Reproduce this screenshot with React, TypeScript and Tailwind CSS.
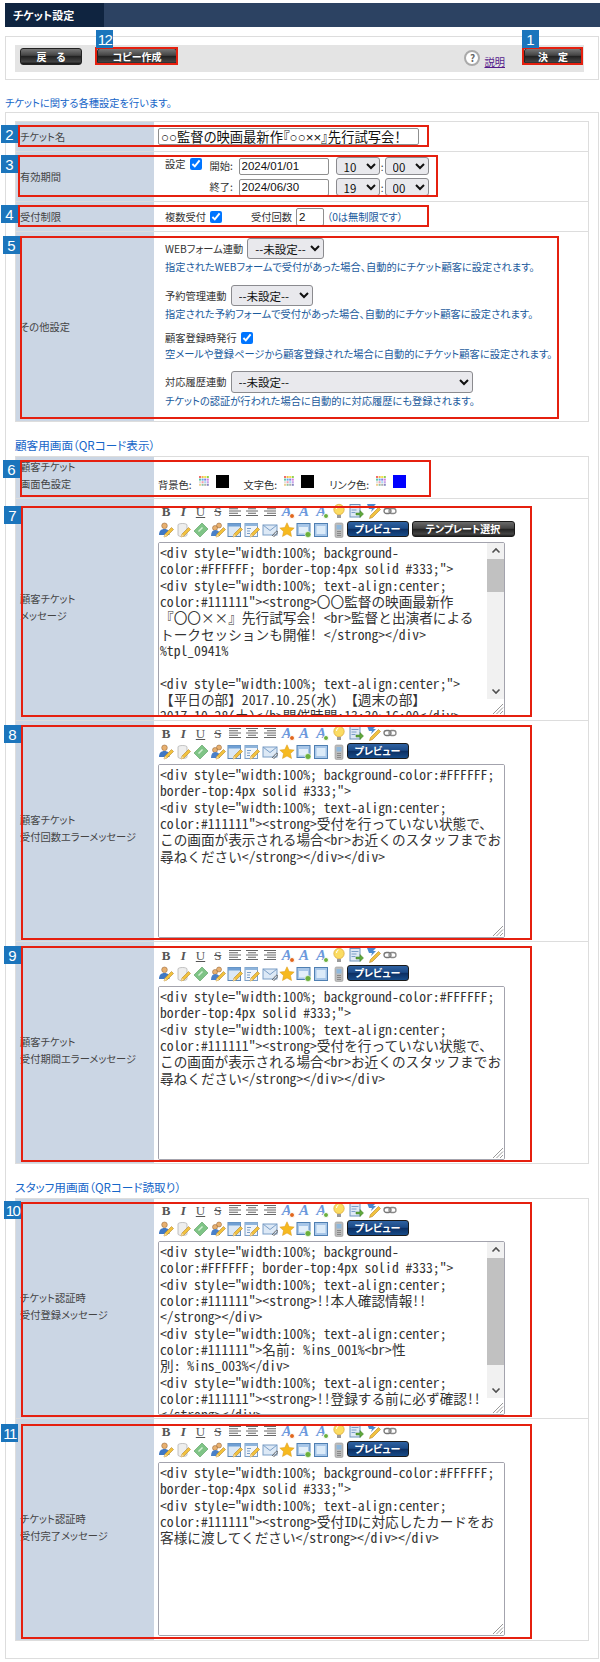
import type { ReactNode } from 'react'

const BODY1 = `<div style="width:100%; background-color:#FFFFFF; border-top:4px solid #333;">`
const CENTER = `<div style="width:100%; text-align:center; color:#111111">`

const MESSAGE_7 = `${BODY1}
${CENTER}<strong>〇〇監督の映画最新作
『〇〇××』先行試写会！ <br>監督と出演者による
トークセッションも開催！ </strong></div>
%tpl_0941%

<div style="width:100%; text-align:center;">
【平日の部】2017.10.25(水)　【週末の部】
2017.10.28(土)</b>開催時間：13:30～16:00</div>`

const ERROR_MESSAGE = `${BODY1}
${CENTER}<strong>受付を行っていない状態で、この画面が表示される場合<br>お近くのスタッフまでお尋ねください</strong></div></div>`

const MESSAGE_10 = `${BODY1}
${CENTER}<strong>!!本人確認情報!!</strong></div>
${CENTER}名前： %ins_001%<br>性
別： %ins_003%</div>
${CENTER}<strong>!!登録する前に必ず確認!!</strong></div>`

const MESSAGE_11 = `${BODY1}
${CENTER}<strong>受付IDに対応したカードをお客様に渡してください</strong></div></div>`

const marks = [
  { box: 'left-[522px] top-[47px] w-[61px] h-[18px]', badge: 'left-[522px] top-[30px]', label: '1' },
  { box: 'left-[95px] top-[47px] w-[83px] h-[18px]', badge: 'left-[96px] top-[30px]', label: '12' },
  { box: 'left-[18px] top-[125px] w-[411px] h-[22px]', badge: 'left-[1px] top-[125px]', label: '2' },
  { box: 'left-[18px] top-[155px] w-[420px] h-[42px]', badge: 'left-[1px] top-[155px]', label: '3' },
  { box: 'left-[18px] top-[205px] w-[411px] h-[22px]', badge: 'left-[1px] top-[205px]', label: '4' },
  { box: 'left-[20px] top-[236px] w-[539px] h-[183px]', badge: 'left-[3px] top-[236px]', label: '5' },
  { box: 'left-[20px] top-[460px] w-[411px] h-[37px]', badge: 'left-[3px] top-[460px]', label: '6' },
  { box: 'left-[21px] top-[506px] w-[511px] h-[211px]', badge: 'left-[4px] top-[506px]', label: '7' },
  { box: 'left-[21px] top-[725px] w-[511px] h-[215px]', badge: 'left-[4px] top-[725px]', label: '8' },
  { box: 'left-[21px] top-[946px] w-[511px] h-[216px]', badge: 'left-[4px] top-[946px]', label: '9' },
  { box: 'left-[21px] top-[1202px] w-[511px] h-[215px]', badge: 'left-[4px] top-[1201px]', label: '10' },
  { box: 'left-[21px] top-[1424px] w-[511px] h-[215px]', badge: 'left-[1px] top-[1424px]', label: '11' },
]

function Pencil() {
  return (
    <g>
      <path d="M13.5 5.5l2 2-6.5 6.5-3 1 1-3z" fill="#f2c23e" stroke="#b5852a" strokeWidth=".6" />
      <path d="M7 12l2 2-3 1z" fill="#f6dca0" />
    </g>
  )
}

function Icon({ children }: { children: ReactNode }) {
  return (
    <svg viewBox="0 0 16 16" className="h-4 w-4 shrink-0">
      {children}
    </svg>
  )
}

function Letter({ className, children }: { className: string; children: ReactNode }) {
  return <span className={`flex h-4 w-4 shrink-0 items-center justify-center font-['Liberation_Serif',serif] text-[13px] leading-none text-[#555] ${className}`}>{children}</span>
}

function Align({ widths }: { widths: [number, number][] }) {
  return (
    <Icon>
      {widths.map(([x1, x2], i) => (
        <path key={i} d={`M${x1} ${3.5 + i * 2.25}H${x2}`} stroke="#666" strokeWidth="1" />
      ))}
    </Icon>
  )
}

function FontIcon({ dot }: { dot?: string }) {
  return (
    <span className="relative flex h-4 w-4 shrink-0 items-center justify-center font-['Liberation_Serif',serif] text-[15px] font-bold italic leading-none text-[#6b98dc]">
      A
      {dot && <span className={`absolute bottom-0 right-0 h-[6px] w-[6px] rounded-full border border-white ${dot}`} />}
    </span>
  )
}

function ToolbarTop() {
  return (
    <div className="flex h-4 items-center gap-[1.25px]">
      <Letter className="font-bold">B</Letter>
      <Letter className="italic font-bold">I</Letter>
      <Letter className="underline">U</Letter>
      <Letter className="line-through">S</Letter>
      <Align widths={[[2, 14], [2, 11], [2, 14], [2, 11], [2, 14]]} />
      <Align widths={[[2, 14], [4, 12], [2, 14], [4, 12], [2, 14]]} />
      <Align widths={[[2, 14], [5, 14], [2, 14], [5, 14], [2, 14]]} />
      <FontIcon dot="bg-[#e2661c]" />
      <FontIcon />
      <FontIcon dot="bg-[#6bb03c]" />
      <Icon>
        <circle cx="8" cy="6.5" r="5.2" fill="#fbdc62" stroke="#d9a63a" strokeWidth=".7" />
        <path d="M5.5 6a2.5 3 0 0 1 2-3" stroke="#fff" fill="none" />
        <rect x="6" y="12" width="4" height="3" fill="#9a9a9a" />
      </Icon>
      <Icon>
        <rect x="2" y="1.5" width="10" height="12.5" fill="#dfe9f6" stroke="#6f93bc" />
        <path d="M3.5 4.5h7M3.5 7h5M3.5 9.5h4" stroke="#7da0c8" />
        <path d="M8 10h4V7.5l3.500 3.500-3.500 3.500V12H8z" fill="#5fa83c" stroke="#3d7f22" strokeWidth=".5" />
      </Icon>
      <Icon>
        <path d="M2 1h9l-3 3h3L6 9l1-3H4z" fill="#4a8ad0" />
        <path d="M13.500 4.500l2 2-8 8-3 1 1-3z" fill="#f2c23e" stroke="#b5852a" strokeWidth=".6" />
      </Icon>
      <Icon>
        <rect x="2" y="5.500" width="7" height="5" rx="2.500" fill="none" stroke="#777" strokeWidth="1.300" />
        <rect x="7" y="5.500" width="7" height="5" rx="2.500" fill="none" stroke="#888" strokeWidth="1.300" />
      </Icon>
    </div>
  )
}

function ToolbarBottom({ template }: { template?: boolean }) {
  return (
    <div className="mt-[2px] flex h-4 items-start">
      <div className="mt-[1px] flex items-center gap-[1.25px]">
        <Icon>
          <circle cx="6.500" cy="3.800" r="2.800" fill="#e8b070" stroke="#8a5a2a" strokeWidth=".5" />
          <path d="M1 13c0-4 2-6 5.500-6s5 2 5 6z" fill="#3f78c4" />
          <Pencil />
        </Icon>
        <Icon>
          <path d="M3 3c0-2 9-2 9 0v10c0 2-9 2-9 0z" fill="#eeeeee" stroke="#aaa" strokeWidth=".7" />
          <Pencil />
        </Icon>
        <Icon>
          <path d="M1 9l8-8 6 6-8 8z" fill="#7fc486" stroke="#559a5c" strokeWidth=".6" />
          <path d="M5.500 9.500l4-4" stroke="#d5efd6" strokeWidth="1.400" />
        </Icon>
        <Icon>
          <circle cx="9" cy="3.500" r="2.500" fill="#e8b070" stroke="#8a5a2a" strokeWidth=".5" />
          <circle cx="5" cy="6" r="2.500" fill="#e8b070" stroke="#8a5a2a" strokeWidth=".5" />
          <path d="M1 14c0-4 1.500-6 4.500-6s4.500 2 4.500 6z" fill="#4a80c8" />
          <Pencil />
        </Icon>
        <Icon>
          <rect x="1" y="1.500" width="12.500" height="13" fill="#dbe8f6" stroke="#5d88b8" />
          <rect x="1" y="1.500" width="12.500" height="3" fill="#6f9fd4" />
          <Pencil />
        </Icon>
        <Icon>
          <rect x="1" y="1.500" width="12.500" height="13" fill="#f0f5fb" stroke="#7b9ec6" />
          <path d="M3 6.500h4M3 9h3M3 11.500h3" stroke="#7b9ec6" />
          <rect x="1" y="1.500" width="12.500" height="2.500" fill="#8fb5dc" />
          <Pencil />
        </Icon>
        <Icon>
          <rect x="1" y="3" width="14" height="10" fill="#dde9f6" stroke="#7b9ec6" />
          <path d="M1 3l7 5.500L15 3" fill="none" stroke="#7b9ec6" />
          <path d="M10 14l4-4.500a1 1 0 0 1 1.500 1.500l-4 4" fill="none" stroke="#666" />
        </Icon>
        <Icon>
          <path d="M8 .8l2.200 4.700 5 .6-3.700 3.400 1 5L8 12l-4.500 2.500 1-5L.8 6.100l5-.6z" fill="#f6b91f" stroke="#d8961a" strokeWidth=".5" />
        </Icon>
        <Icon>
          <rect x="1" y="1.500" width="13" height="12" fill="#a7c6e8" stroke="#4f7fb2" />
          <rect x="3" y="5" width="9" height="6.500" fill="#e3effa" />
          <circle cx="12" cy="12.500" r="3" fill="#6bb03c" stroke="#fff" strokeWidth=".6" />
        </Icon>
        <Icon>
          <rect x="1.500" y="1.500" width="13" height="13" fill="#a7c6e8" stroke="#4f7fb2" />
          <rect x="3.500" y="4" width="9" height="8" fill="#dcebf9" />
        </Icon>
        <Icon>
          <rect x="4" y="1" width="8" height="14.500" rx="1.500" fill="#bcbcbc" stroke="#999" strokeWidth=".6" />
          <rect x="5.500" y="3" width="5" height="4.500" fill="#8fb8dc" />
          <path d="M6 9.500h4M6 11.500h4M6 13.500h4" stroke="#888" />
        </Icon>
      </div>
      <SmallButton className="w-[62px] bg-[linear-gradient(#2f62a2_0%,#1c4a86_45%,#0c2f63_52%,#174b88_100%)]">プレビュー</SmallButton>
      {template && <SmallButton className="ml-[3px] w-[103px] bg-[linear-gradient(#6a6a6a_0%,#444_45%,#222_52%,#444_85%,#222_100%)]">テンプレート選択</SmallButton>}
    </div>
  )
}

function SmallButton({ className, children }: { className: string; children: ReactNode }) {
  return <button type="button" className={`flex h-4 items-center justify-center rounded-[3px] border border-[#1a1a1a] text-[10px] font-bold leading-none text-white ${className}`}>{children}</button>
}

function DarkButton({ className, children }: { className: string; children: ReactNode }) {
  return (
    <button type="button" className={`flex h-[17px] items-center justify-center rounded-[3px] border border-[#222] bg-[linear-gradient(#777_0%,#444_42%,#222_50%,#444_85%,#111_100%)] text-[10px] font-bold leading-none text-white ${className}`}>
      {children}
    </button>
  )
}

function Resizer() {
  return (
    <svg viewBox="0 0 14 14" className="absolute bottom-0 right-0 h-[14px] w-[14px]">
      <path d="M13 3L3 13M13 6.500L6.500 13M13 10L10 13" stroke="#999" strokeWidth="1" />
    </svg>
  )
}

function Scrollbar({ height }: { height: string }) {
  return (
    <div className="flex h-full w-[17px] shrink-0 flex-col">
      <div className="flex h-[16px] items-center justify-center bg-[#f1f1f1]">
        <svg viewBox="0 0 10 10" className="h-[10px] w-[10px]"><path d="M1.500 6.500L5 3l3.500 3.500" fill="none" stroke="#505050" strokeWidth="1.600" /></svg>
      </div>
      <div className="flex-1 bg-[#f1f1f1]">
        <div className={`bg-[#c1c1c1] ${height}`} />
      </div>
      <div className="flex h-[16px] items-center justify-center bg-[#f1f1f1]">
        <svg viewBox="0 0 10 10" className="h-[10px] w-[10px]"><path d="M1.500 3.500L5 7l3.500-3.500" fill="none" stroke="#505050" strokeWidth="1.600" /></svg>
      </div>
      <div className="h-[16px] bg-white" />
    </div>
  )
}

function Editor({ text, top, template, scroll }: { text: string; top: string; template?: boolean; scroll?: ReactNode }) {
  return (
    <div className={`pl-[4px] ${top}`}>
      <ToolbarTop />
      <ToolbarBottom template={template} />
      <div className="relative mt-[5px] flex h-[174px] w-[347px] overflow-hidden rounded-[2px] border border-[#a3a3ad] bg-white">
        <textarea
          readOnly
          defaultValue={text}
          className="h-full min-w-0 flex-1 resize-none overflow-hidden bg-white px-[1px] py-[1px] font-['Noto_Sans_CJK_JP',sans-serif] text-[13.65px] leading-[16.35px] text-[#333] [font-feature-settings:'hwid'] outline-none"
        />
        {scroll}
        <Resizer />
      </div>
    </div>
  )
}

function Row({ height, lines, last, children }: { height: string; lines: string[]; last?: boolean; children: ReactNode }) {
  return (
    <div className={`flex ${height} ${last ? '' : 'border-b border-[#dddddd]'}`}>
      <div className={`flex w-[138px] shrink-0 flex-col justify-center bg-[#cbd6e4] pl-[4px] text-[10.25px] text-[#444] ${lines.length > 1 ? 'pb-[6px] leading-[17px]' : ''}`}>
        {lines.map((line) => (
          <p key={line}>{line}</p>
        ))}
      </div>
      <div className="min-w-0 flex-1">{children}</div>
    </div>
  )
}

function Hint({ children }: { children: ReactNode }) {
  return <p className="h-[16px] text-[10.25px] leading-[16px] text-[#1a5a9c]">{children}</p>
}

function SectionTitle({ children }: { children: ReactNode }) {
  return <h2 className="flex h-[34px] items-end pb-[3px] text-[11.6px] font-normal leading-[16px] text-[#1565c8]">{children}</h2>
}

function Select({ className, value }: { className: string; value: string }) {
  return (
    <select defaultValue={value} className={`rounded-[3px] border border-[#8b8b8f] bg-[#e9e9ed] pl-[3px] font-['Noto_Sans_CJK_JP',sans-serif] text-[11.5px] leading-none text-[#111] ${className}`}>
      <option>{value}</option>
    </select>
  )
}

function Check() {
  return <input type="checkbox" defaultChecked className="m-0 h-[12px] w-[12px] shrink-0 accent-[#0075ff]" />
}

function Field({ className, value }: { className: string; value: string }) {
  return <input type="text" defaultValue={value} className={`rounded-[2px] border border-[#8f8f8f] bg-white px-[2px] py-0 font-['Liberation_Sans','Noto_Sans_CJK_JP',sans-serif] leading-[15px] text-[#111] outline-none ${className}`} />
}

function Swatch({ label, color }: { label: string; color: string }) {
  return (
    <div className="flex items-center">
      <span className="mt-[7px] text-[10.25px] text-[#333]">{label}</span>
      <svg viewBox="0 0 10 10" className="ml-[7px] h-[10px] w-[10px]">
        {['#f26c6c', '#f2b84c', '#f2e24c', '#8fd24c', '#5cc8a0', '#5ca8e8', '#7c7ce8', '#d87ce0', '#e0e0e0', '#f29cb0', '#a8d8f0', '#c8a0e8', '#f0d090', '#90c0a0', '#b0b0b0', '#8888c0'].map((fill, i) => (
          <rect key={fill} x={(i % 4) * 2.6} y={Math.floor(i / 4) * 2.6} width="2" height="2" fill={fill} />
        ))}
      </svg>
      <span className={`ml-[7px] h-[13px] w-[13px] ${color}`} />
    </div>
  )
}

function DateRow({ label, date, hour, className }: { label: string; date: string; hour: string; className?: string }) {
  return (
    <div className={`flex items-center ${className ?? ''}`}>
      <span className="w-[29px] text-[10.25px] text-[#333]">{label}</span>
      <Field className="h-[17px] w-[90px] text-[11.5px]" value={date} />
      <Select className="ml-[7px] h-[18px] w-[44px]" value={hour} />
      <span className="w-[5px] text-center text-[10px] text-[#333]">:</span>
      <Select className="h-[18px] w-[44px]" value="00" />
    </div>
  )
}

export default function App() {
  return (
    <div className="relative h-[1662px] w-[600px] overflow-hidden bg-white pt-[3px] font-['Noto_Sans_CJK_JP',sans-serif] [font-feature-settings:'palt']">
      <div className="ml-[5px] flex h-[24px] w-[595px] bg-[#2c4262]">
        <h1 className="flex w-[99px] items-center bg-[#0f2440] pl-[8px] text-[11px] font-bold text-white">チケット設定</h1>
      </div>

      <div className="ml-[5px] mt-[9px] h-[44px] w-[594px] border border-[#dddddd] pl-[9px] pt-[8px]">
        <div className="flex h-[27px] w-[569px] items-start bg-[#e4e4e4] pl-[5px] pr-[2px] pt-[3px]">
          <DarkButton className="w-[62px]">戻　る</DarkButton>
          <DarkButton className="ml-[15px] w-[80px]">コピー作成</DarkButton>
          <div className="ml-auto mt-[1px] flex items-center">
            <span className="flex h-[16px] w-[16px] items-center justify-center rounded-full border-2 border-[#aaaaaa] bg-white text-[10px] font-bold leading-none text-[#666]">?</span>
            <a href="#" className="ml-[4px] mt-[8px] text-[10.25px] leading-none text-[#551a8b] underline">説明</a>
          </div>
          <DarkButton className="ml-[19px] w-[58px]">決　定</DarkButton>
        </div>
      </div>

      <p className="flex h-[32px] items-end pb-[1px] pl-[5px] text-[10.25px] leading-[16px] text-[#1565c8]">チケットに関する各種設定を行います。</p>

      <div className="ml-[5px] w-[594px] border border-[#dddddd] pb-[17px] pl-[9px] pt-[8px]">
        <div className="w-[574px] border border-[#dddddd]">
          <Row height="h-[30px]" lines={['チケット名']}>
            <div className="flex pl-[4px] pt-[6px]">
              <Field className="h-[17px] w-[261px] text-[13.3px]" value="○○監督の映画最新作『○○××』先行試写会！" />
            </div>
          </Row>
          <Row height="h-[50px]" lines={['有効期間']}>
            <div className="flex pl-[11px] pt-[5px]">
              <div className="flex h-[14px] items-center gap-[4px]">
                <span className="text-[10.25px] text-[#333]">設定</span>
                <Check />
              </div>
              <div className="ml-[8px]">
                <DateRow label="開始:" date="2024/01/01" hour="10" />
                <DateRow label="終了:" date="2024/06/30" hour="19" className="mt-[3px]" />
              </div>
            </div>
          </Row>
          <Row height="h-[30px]" lines={['受付制限']}>
            <div className="flex items-center pl-[11px] pt-[6px] text-[10.25px] text-[#333]">
              <span>複数受付</span>
              <span className="ml-[4px] flex"><Check /></span>
              <span className="ml-[29px]">受付回数</span>
              <Field className="ml-[4px] h-[18px] w-[28px] text-[11.5px]" value="2" />
              <span className="ml-[3px] text-[#1a5a9c]">（0は無制限です）</span>
            </div>
          </Row>
          <Row height="h-[189px]" lines={['その他設定']} last>
            <div className="pl-[11px] pt-[6px] text-[10.25px] text-[#333]">
              <div className="flex h-[21px] items-center">
                <span>WEBフォーム連動</span>
                <Select className="ml-[4px] h-[21px] w-[77px]" value="--未設定--" />
              </div>
              <Hint>指定されたWEBフォームで受付があった場合、自動的にチケット顧客に設定されます。</Hint>
              <div className="mt-[10px] flex h-[21px] items-center">
                <span>予約管理連動</span>
                <Select className="ml-[4px] h-[21px] w-[82px]" value="--未設定--" />
              </div>
              <Hint>指定された予約フォームで受付があった場合、自動的にチケット顧客に設定されます。</Hint>
              <div className="mt-[8px] flex h-[16px] items-center">
                <span>顧客登録時発行</span>
                <span className="ml-[4px] flex"><Check /></span>
              </div>
              <Hint>空メールや登録ページから顧客登録された場合に自動的にチケット顧客に設定されます。</Hint>
              <div className="mt-[9px] flex h-[22px] items-center">
                <span>対応履歴連動</span>
                <Select className="ml-[4px] h-[22px] w-[242px]" value="--未設定--" />
              </div>
              <Hint>チケットの認証が行われた場合に自動的に対応履歴にも登録されます。</Hint>
            </div>
          </Row>
        </div>

        <SectionTitle>顧客用画面（QRコード表示）</SectionTitle>
        <div className="w-[574px] border border-[#dddddd]">
          <Row height="h-[42px]" lines={['顧客チケット', '画面色設定']}>
            <div className="flex gap-[15px] pl-[4px] pt-[13px]">
              <Swatch label="背景色:" color="bg-black" />
              <Swatch label="文字色:" color="bg-black" />
              <Swatch label="リンク色:" color="bg-[#0000ff]" />
            </div>
          </Row>
          <Row height="h-[222px]" lines={['顧客チケット', 'メッセージ']}>
            <Editor text={MESSAGE_7} top="pt-[4px]" template scroll={<Scrollbar height="h-[33px]" />} />
          </Row>
          <Row height="h-[221px]" lines={['顧客チケット', '受付回数エラーメッセージ']}>
            <Editor text={ERROR_MESSAGE} top="pt-[4px]" />
          </Row>
          <Row height="h-[221px]" lines={['顧客チケット', '受付期間エラーメッセージ']} last>
            <Editor text={ERROR_MESSAGE} top="pt-[5px]" />
          </Row>
        </div>

        <SectionTitle>スタッフ用画面（QRコード読取り）</SectionTitle>
        <div className="w-[574px] border border-[#dddddd]">
          <Row height="h-[220px]" lines={['チケット認証時', '受付登録メッセージ']}>
            <Editor text={MESSAGE_10} top="pt-[3px]" scroll={<Scrollbar height="h-[107px]" />} />
          </Row>
          <Row height="h-[221px]" lines={['チケット認証時', '受付完了メッセージ']} last>
            <Editor text={MESSAGE_11} top="pt-[4px]" />
          </Row>
        </div>
      </div>

      {marks.map((mark) => (
        <div key={mark.label}>
          <div className={`pointer-events-none absolute border-2 border-[#e5200f] ${mark.box}`} />
          <span className={`absolute flex h-[18px] w-[17px] items-center justify-center bg-[#1b75bc] font-['Liberation_Sans',sans-serif] text-[15px] leading-none text-white ${mark.label.length > 1 ? 'tracking-[-1.5px]' : ''} ${mark.badge}`}>
            {mark.label}
          </span>
        </div>
      ))}
    </div>
  )
}
